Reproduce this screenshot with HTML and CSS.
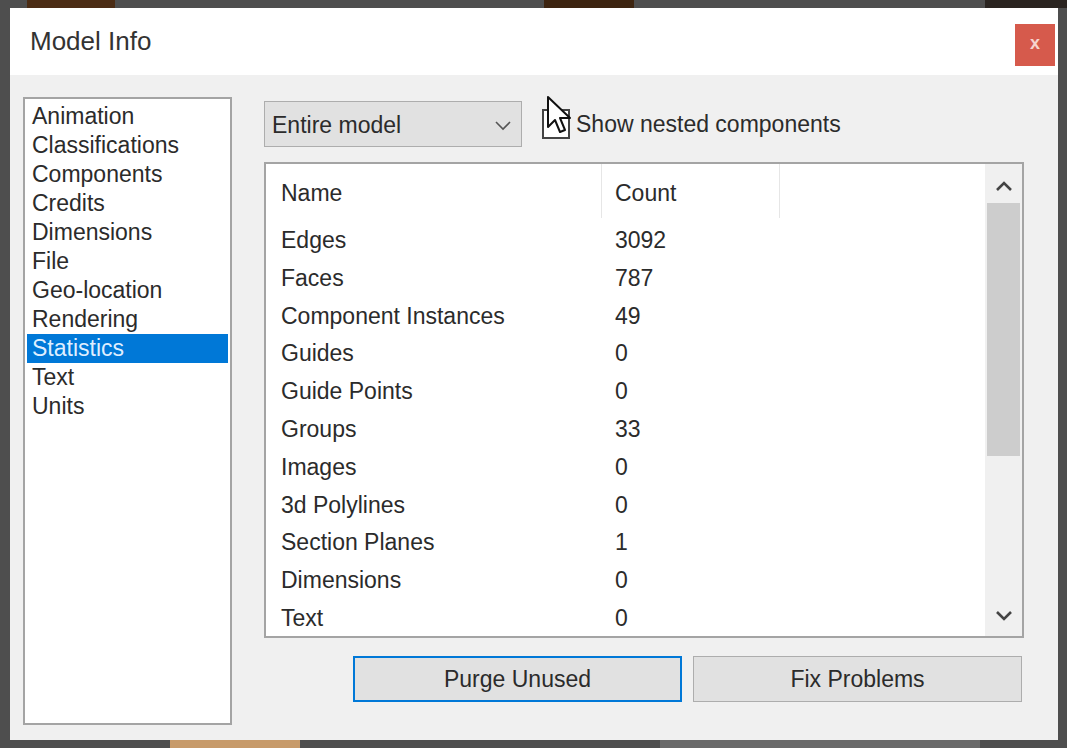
FILE: index.html
```html
<!DOCTYPE html>
<html lang="en">
<head>
    <meta charset="utf-8">
    <title>Model Info</title>
    <link rel="stylesheet" href="styles.css">
</head>
<body>
    <div class="dialog">
        <div class="title-bar">
            <span class="title">Model Info</span>
            <button class="close-btn">x</button>
        </div>

        <div class="dialog-body">
            <ul class="page-list">
                <li>Animation</li>
                <li>Classifications</li>
                <li>Components</li>
                <li>Credits</li>
                <li>Dimensions</li>
                <li>File</li>
                <li>Geo-location</li>
                <li>Rendering</li>
                <li class="selected">Statistics</li>
                <li>Text</li>
                <li>Units</li>
            </ul>

            <div class="panel">
                <div class="toolbar">
                    <div class="dropdown">
                        <span>Entire model</span>
                        <svg class="chevron" width="16" height="10" viewBox="0 0 16 10">
                            <path d="M1 1 L8 8 L15 1" fill="none" stroke="#555" stroke-width="1.6"/>
                        </svg>
                    </div>
                    <label class="check">
                        <span class="box"></span>
                        Show nested components
                    </label>
                    <!-- mouse pointer over the checkbox -->
                    <svg class="cursor" width="26" height="40" viewBox="0 0 26 40">
                        <path d="M2 2 L2 32 L9 25 L14 37 L19 35 L14 23 L24 23 Z" fill="#fff" stroke="#111" stroke-width="2" stroke-linejoin="round"/>
                    </svg>
                </div>

                <div class="stats">
                    <div class="stats-grid">
                        <div class="head">Name</div>
                        <div class="head sep">Count</div>
                        <div class="head sep"></div>
                    </div>
                    <div class="stats-rows" id="rows"></div>
                    <div class="scrollbar">
                        <svg class="arrow" width="18" height="12" viewBox="0 0 18 12">
                            <path d="M2 10 L9 3 L16 10" fill="none" stroke="#444" stroke-width="2.6"/>
                        </svg>
                        <div class="thumb"></div>
                        <div class="track"></div>
                        <svg class="arrow" width="18" height="12" viewBox="0 0 18 12">
                            <path d="M2 2 L9 9 L16 2" fill="none" stroke="#444" stroke-width="2.6"/>
                        </svg>
                    </div>
                </div>

                <div class="buttons">
                    <button class="btn default">Purge Unused</button>
                    <button class="btn">Fix Problems</button>
                </div>
            </div>
        </div>
    </div>

    <script>
        let stats = [
            ['Edges', 3092],
            ['Faces', 787],
            ['Component Instances', 49],
            ['Guides', 0],
            ['Guide Points', 0],
            ['Groups', 33],
            ['Images', 0],
            ['3d Polylines', 0],
            ['Section Planes', 1],
            ['Dimensions', 0],
            ['Text', 0]
        ];

        let rows = document.getElementById('rows');
        stats.forEach(function(s) {
            let row = document.createElement('div');
            row.className = 'row';
            row.innerHTML = '<span class="name">' + s[0] + '</span><span class="count">' + s[1] + '</span>';
            rows.appendChild(row);
        });
    </script>
</body>
</html>
```

FILE: styles.css
```css
body {
    margin: 0;
    width: 1067px;
    height: 748px;
    overflow: hidden;
    font-family: "Liberation Sans", Arial, sans-serif;
    font-size: 23px;
    color: #2b2b2b;
    background:
        linear-gradient(#4b2c14, #4b2c14) 27px 0 / 88px 8px no-repeat,
        linear-gradient(#3d2410, #3d2410) 544px 0 / 90px 8px no-repeat,
        linear-gradient(#2a2420, #2a2420) 985px 0 / 82px 8px no-repeat,
        linear-gradient(#c79a6a, #c79a6a) 170px 740px / 130px 8px no-repeat,
        linear-gradient(#111, #111) 205px 740px / 12px 8px no-repeat,
        linear-gradient(#6a6a6a, #6a6a6a) 660px 740px / 320px 8px no-repeat,
        #4e4e4e;
}
.dialog {
    margin: 8px 0 0 10px;
    width: 1048px;
    height: 732px;
    background: #f0f0f0;
    display: flex;
    flex-direction: column;
}
.title-bar {
    height: 67px;
    background: #fff;
    display: flex;
    align-items: flex-start;
    justify-content: space-between;
}
.title {
    margin: 18px 0 0 20px;
    font-size: 26px;
    color: #333;
}
.close-btn {
    margin: 16px 3px 0 0;
    width: 40px;
    height: 42px;
    border: none;
    background: #d65a4c;
    color: #f6d3cd;
    font-family: "Liberation Sans", Arial, sans-serif;
    font-size: 18px;
    font-weight: bold;
    padding: 0 0 4px;
}
.dialog-body {
    flex: 1;
    display: flex;
    padding: 22px 0 0 13px;
}
.page-list {
    list-style: none;
    margin: 0;
    padding: 3px 2px;
    width: 201px;
    height: 618px;
    background: #fff;
    border: 2px solid #a4a4a4;
    line-height: 29px;
}
.page-list li {
    padding-left: 5px;
    height: 29px;
}
.page-list li.selected {
    background: #0078d7;
    color: #dfeeff;
}
.panel {
    margin-left: 32px;
    width: 760px;
    display: flex;
    flex-direction: column;
}
.toolbar {
    position: relative;
    display: flex;
    align-items: center;
    margin-top: 4px;
    height: 46px;
}
.dropdown {
    width: 258px;
    height: 46px;
    box-sizing: border-box;
    border: 1px solid #adadad;
    background: #e1e1e1;
    display: flex;
    align-items: center;
    justify-content: space-between;
    padding: 2px 10px 0 7px;
}
.chevron {
    margin-top: 2px;
}
.check {
    display: flex;
    align-items: center;
    margin-left: 20px;
}
.box {
    width: 24px;
    height: 26px;
    border: 2px solid #444;
    background: #fff;
    margin-right: 6px;
}
.cursor {
    position: absolute;
    left: 282px;
    top: -6px;
}
.stats {
    margin-top: 15px;
    height: 476px;
    box-sizing: border-box;
    border: 2px solid #a4a4a4;
    background: #fff;
    position: relative;
    overflow: hidden;
}
.stats-grid {
    display: grid;
    grid-template-columns: 335px 178px 206px;
    height: 58px;
}
.head {
    padding: 4px 0 0 15px;
    height: 50px;
    line-height: 50px;
}
.head.sep {
    border-left: 1px solid #e6e6e6;
    padding-left: 13px;
}
.stats-rows {
    width: 719px;
}
.row {
    display: grid;
    grid-template-columns: 335px 178px;
    height: 37.8px;
    line-height: 37.8px;
}
.row .name {
    padding-left: 15px;
}
.row .count {
    padding-left: 14px;
}
.scrollbar {
    position: absolute;
    top: 0;
    right: 0;
    bottom: 0;
    width: 37px;
    background: #f0f0f0;
    display: flex;
    flex-direction: column;
    align-items: center;
}
.arrow {
    margin: 14px 0;
}
.scrollbar .arrow:first-child {
    margin: 16px 0 11px;
}
.thumb {
    width: 33px;
    height: 253px;
    background: #cdcdcd;
}
.track {
    flex: 1;
}
.buttons {
    display: flex;
    justify-content: flex-end;
    gap: 11px;
    margin-top: 18px;
    padding-right: 2px;
}
.btn {
    width: 329px;
    height: 46px;
    border: 1px solid #adadad;
    background: #e1e1e1;
    font-family: "Liberation Sans", Arial, sans-serif;
    font-size: 23px;
    color: #2b2b2b;
}
.btn.default {
    border: 2px solid #0078d7;
}
```
